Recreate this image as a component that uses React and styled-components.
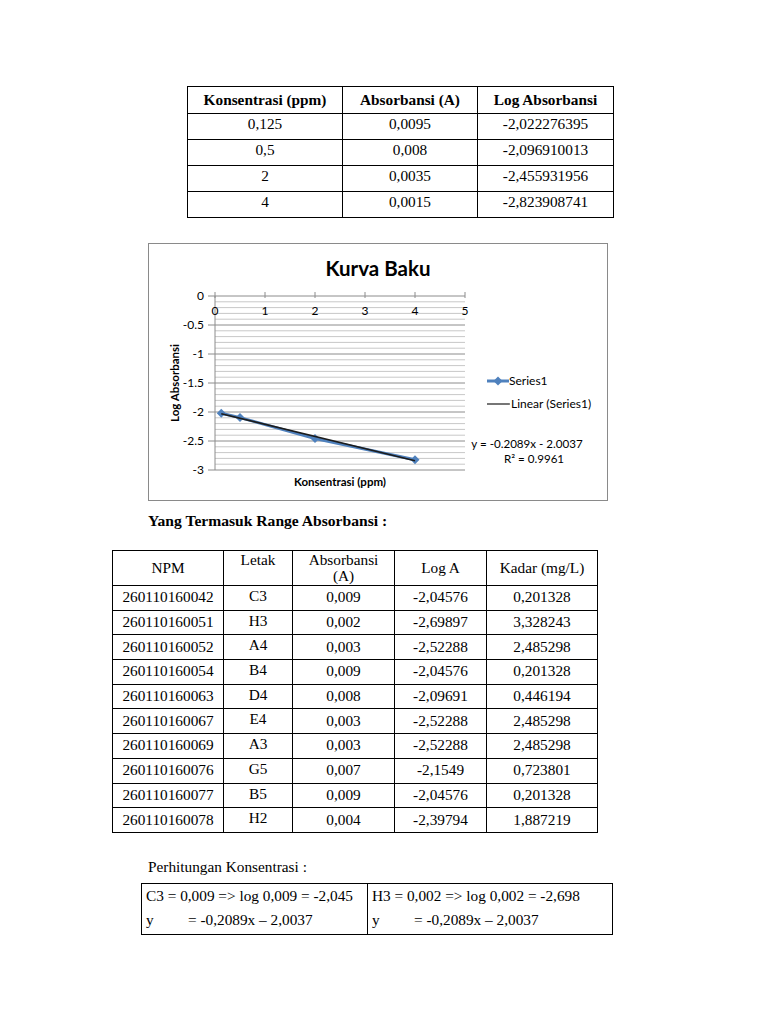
import React from "react";
import styled, { createGlobalStyle } from "styled-components";

const standar = [
  ["0,125", "0,0095", "-2,022276395"],
  ["0,5", "0,008", "-2,096910013"],
  ["2", "0,0035", "-2,455931956"],
  ["4", "0,0015", "-2,823908741"],
];

const sampel = [
  ["260110160042", "C3", "0,009", "-2,04576", "0,201328"],
  ["260110160051", "H3", "0,002", "-2,69897", "3,328243"],
  ["260110160052", "A4", "0,003", "-2,52288", "2,485298"],
  ["260110160054", "B4", "0,009", "-2,04576", "0,201328"],
  ["260110160063", "D4", "0,008", "-2,09691", "0,446194"],
  ["260110160067", "E4", "0,003", "-2,52288", "2,485298"],
  ["260110160069", "A3", "0,003", "-2,52288", "2,485298"],
  ["260110160076", "G5", "0,007", "-2,1549", "0,723801"],
  ["260110160077", "B5", "0,009", "-2,04576", "0,201328"],
  ["260110160078", "H2", "0,004", "-2,39794", "1,887219"],
];

const titik = [
  [0.125, -2.022276395],
  [0.5, -2.096910013],
  [2, -2.455931956],
  [4, -2.823908741],
];

// skala grafik (koordinat lokal svg)
const X0 = 66;
const SX = 50;
const Y0 = 52;
const SY = 58;
const px = (x) => X0 + x * SX;
const py = (y) => Y0 - y * SY;
const garisTren = (x) => -0.2089 * x - 2.0037;

const GlobalStyle = createGlobalStyle`
  body {
    margin: 0;
    background: #fff;
    font-family: "Liberation Serif", "Times New Roman", serif;
    color: #000;
  }
`;

const Page = styled.div`
  width: 768px;
  min-height: 1024px;
  padding-top: 86px;
  box-sizing: border-box;
`;

const Table = styled.table`
  border-collapse: collapse;
  margin: ${(p) => p.$top || 0}px 0 0 ${(p) => p.$left}px;
  width: ${(p) => p.$width}px;
  font-size: 15.3px;
  table-layout: fixed;
`;

const Col = styled.col`
  width: ${(p) => p.$w}px;
`;

const Th = styled.th`
  border: 1px solid #000;
  height: ${(p) => p.$h || 26}px;
  padding: ${(p) => (p.$top ? "1px" : "0")} 2px 0;
  font-weight: ${(p) => (p.$bold ? "bold" : "normal")};
  vertical-align: ${(p) => (p.$top ? "top" : "middle")};
  line-height: 16px;
  box-sizing: border-box;
  white-space: nowrap;
`;

const Td = styled.td`
  border: 1px solid #000;
  height: ${(p) => p.$h || 26}px;
  padding: ${(p) => (p.$top ? "1px 2px 0" : "0 2px 2px")};
  text-align: center;
  vertical-align: ${(p) => (p.$top ? "top" : "middle")};
  box-sizing: border-box;
  line-height: 17px;
  white-space: nowrap;
`;

const ChartFrame = styled.div`
  margin: 25px 0 0 148px;
  width: 460px;
  height: 258px;
  border: 1px solid #8a8a8a;
  box-sizing: border-box;
  svg {
    display: block;
    font-family: Lato, "Liberation Sans", sans-serif;
  }
`;

const Heading = styled.div`
  margin: ${(p) => p.$top}px 0 0 148px;
  font-size: ${(p) => (p.$bold ? "15.6px" : "15.3px")};
  font-weight: ${(p) => (p.$bold ? "bold" : "normal")};
  line-height: 17px;
`;

const CalcCell = styled.td`
  border: 1px solid #000;
  vertical-align: top;
  padding: 0 3px 2px 4px;
  height: 50px;
  box-sizing: border-box;
  line-height: 24px;
  white-space: nowrap;
`;

const Eq = styled.span`
  display: inline-block;
  width: 42px;
`;

const ChartText = styled.text`
  font-size: ${(p) => p.$size || 12}px;
  font-weight: ${(p) => (p.$bold ? "bold" : "normal")};
  fill: #000;
`;

function Kurva() {
  const grid = [];
  for (let i = 1; i <= 30; i++) {
    const v = -i / 10;
    const major = i % 5 === 0;
    grid.push(
      <line
        key={i}
        x1={X0}
        x2={316}
        y1={py(v)}
        y2={py(v)}
        stroke={major ? "#8c8c8c" : "#c8c8c8"}
        strokeWidth="1"
      />
    );
  }
  const yLabels = ["0", "-0.5", "-1", "-1.5", "-2", "-2.5", "-3"];
  const diamond = (cx, cy, r = 4.5) =>
    `${cx},${cy - r} ${cx + r},${cy} ${cx},${cy + r} ${cx - r},${cy}`;

  return (
    <svg width="458" height="256" viewBox="0 0 458 256">
      <ChartText x="229" y="32" textAnchor="middle" $size={20.5} $bold>
        Kurva Baku
      </ChartText>

      {grid}
      <line x1={X0} x2={316} y1={Y0} y2={Y0} stroke="#8c8c8c" />
      <line x1={X0} x2={X0} y1={Y0} y2={py(-3)} stroke="#8c8c8c" />
      {yLabels.map((l, i) => (
        <g key={l}>
          <line x1={X0 - 7} x2={X0} y1={Y0 + i * 29} y2={Y0 + i * 29} stroke="#8c8c8c" />
          <ChartText x="55" y={Y0 + i * 29 + 4} textAnchor="end">
            {l}
          </ChartText>
        </g>
      ))}
      {[0, 1, 2, 3, 4, 5].map((v) => (
        <g key={v}>
          <line x1={px(v)} x2={px(v)} y1={Y0 - 4} y2={Y0 + 2} stroke="#8c8c8c" />
          <ChartText x={px(v)} y="71" textAnchor="middle">
            {v}
          </ChartText>
        </g>
      ))}

      <polyline
        points={titik.map(([x, y]) => `${px(x)},${py(y)}`).join(" ")}
        fill="none"
        stroke="#4f81bd"
        strokeWidth="3"
      />
      {titik.map(([x, y]) => (
        <polygon key={x} points={diamond(px(x), py(y))} fill="#4f81bd" />
      ))}
      <line
        x1={px(0.125)}
        y1={py(garisTren(0.125))}
        x2={px(4)}
        y2={py(garisTren(4))}
        stroke="#1c1c1c"
        strokeWidth="1.6"
      />

      <ChartText transform="translate(30 139) rotate(-90)" textAnchor="middle" $size={11.5} $bold>
        Log Absorbansi
      </ChartText>
      <ChartText x="191" y="242" textAnchor="middle" $size={11.5} $bold>
        Konsentrasi (ppm)
      </ChartText>

      <line x1="338" x2="360" y1="137" y2="137" stroke="#4f81bd" strokeWidth="3" />
      <polygon points={diamond(349, 137)} fill="#4f81bd" />
      <ChartText x="360" y="141">
        Series1
      </ChartText>
      <line x1="338" x2="361" y1="160" y2="160" stroke="#1c1c1c" strokeWidth="1.2" />
      <ChartText x="362" y="164">
        Linear (Series1)
      </ChartText>

      <ChartText x="378" y="204" textAnchor="middle" $size={11.6}>
        y = -0.2089x - 2.0037
      </ChartText>
      <ChartText x="385" y="219" textAnchor="middle" $size={11.6}>
        R² = 0.9961
      </ChartText>
    </svg>
  );
}

export default function App() {
  return (
    <Page>
      <GlobalStyle />
      <Table $left={187} $width={426}>
        <colgroup>
          <Col $w={155} />
          <Col $w={135} />
          <Col $w={136} />
        </colgroup>
        <thead>
          <tr>
            <Th $bold $h={27}>Konsentrasi (ppm)</Th>
            <Th $bold $h={27}>Absorbansi (A)</Th>
            <Th $bold $h={27}>Log Absorbansi</Th>
          </tr>
        </thead>
        <tbody>
          {standar.map((r) => (
            <tr key={r[0]}>
              {r.map((c, i) => (
                <Td key={i} $top>
                  {c}
                </Td>
              ))}
            </tr>
          ))}
        </tbody>
      </Table>

      <ChartFrame>
        <Kurva />
      </ChartFrame>

      <Heading $bold $top={11}>
        Yang Termasuk Range Absorbansi :
      </Heading>

      <Table $left={112} $width={485} $top={21}>
        <colgroup>
          <Col $w={111} />
          <Col $w={69} />
          <Col $w={102} />
          <Col $w={92} />
          <Col $w={111} />
        </colgroup>
        <thead>
          <tr>
            <Th $h={35}>NPM</Th>
            <Th $h={35} $top>
              Letak
            </Th>
            <Th $h={35}>
              Absorbansi
              <br />
              (A)
            </Th>
            <Th $h={35}>Log A</Th>
            <Th $h={35}>Kadar (mg/L)</Th>
          </tr>
        </thead>
        <tbody>
          {sampel.map((r) => (
            <tr key={r[0]}>
              {r.map((c, i) => (
                <Td key={i} $h={24.7} $top={i === 1}>
                  {c}
                </Td>
              ))}
            </tr>
          ))}
        </tbody>
      </Table>

      <Heading $top={25}>Perhitungan Konsentrasi :</Heading>
      <Table $left={141} $width={471} $top={8}>
        <colgroup>
          <Col $w={226} />
          <Col $w={245} />
        </colgroup>
        <tbody>
          <tr>
            <CalcCell>
              C3 = 0,009 =&gt; log 0,009 = -2,045
              <br />
              <Eq>y</Eq>= -0,2089x – 2,0037
            </CalcCell>
            <CalcCell>
              H3 = 0,002 =&gt; log 0,002 = -2,698
              <br />
              <Eq>y</Eq>= -0,2089x – 2,0037
            </CalcCell>
          </tr>
        </tbody>
      </Table>
    </Page>
  );
}
